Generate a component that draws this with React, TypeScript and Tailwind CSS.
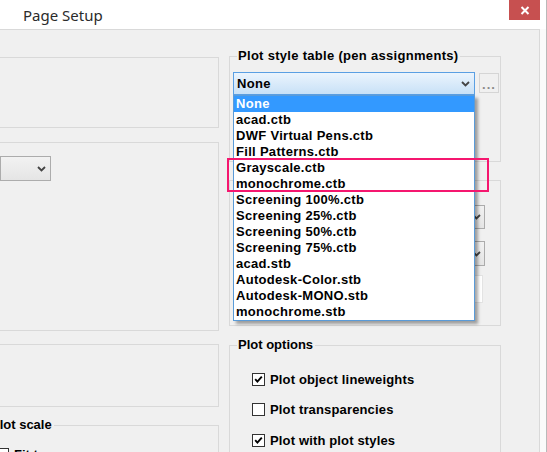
import React from "react";

const Chevron = ({ color = "#444" }: { color?: string }) => (
  <svg width="9" height="6" viewBox="0 0 9 6">
    <path d="M1 1 L4.5 4.5 L8 1" fill="none" stroke={color} strokeWidth="1.8" />
  </svg>
);

const Check = ({ checked }: { checked: boolean }) => (
  <span className="w-[13px] h-[13px] shrink-0 border border-[#333] bg-white flex items-center justify-center">
    {checked && (
      <svg width="9" height="9" viewBox="0 0 9 9">
        <polyline points="1.2,4.2 3.4,6.6 7.8,1.6" fill="none" stroke="#000" strokeWidth="1.9" />
      </svg>
    )}
  </span>
);

const Header = ({ label, labelClass = "" }: { label?: string; labelClass?: string }) => (
  <div className="flex h-[16px]">
    <div className="w-[8px] mt-[8px] border-l border-t border-[#d9d9d9]" />
    {label ? (
      <span className={"pl-[1px] pr-[2px] leading-[16px] whitespace-nowrap " + labelClass}>{label}</span>
    ) : null}
    <div className="flex-1 mt-[8px] border-t border-r border-[#d9d9d9]" />
  </div>
);

const items = [
  "None",
  "acad.ctb",
  "DWF Virtual Pens.ctb",
  "Fill Patterns.ctb",
  "Grayscale.ctb",
  "monochrome.ctb",
  "Screening 100%.ctb",
  "Screening 25%.ctb",
  "Screening 50%.ctb",
  "Screening 75%.ctb",
  "acad.stb",
  "Autodesk-Color.stb",
  "Autodesk-MONO.stb",
  "monochrome.stb",
];

export default function App() {
  return (
    <div className="relative w-[547px] h-[452px] overflow-hidden bg-white flex font-['Liberation_Sans',Arial,sans-serif] text-[13px] font-bold text-black">
      <div className="w-[546px] flex flex-col">
        {/* Title bar */}
        <div className="h-[29px] shrink-0 flex items-start">
          <span className="ml-[23px] mt-[5px] text-[15px] leading-[20px] font-normal text-[#2b2b2b] font-['Noto_Sans',sans-serif]">
            Page Setup
          </span>
          <div className="ml-auto mr-[6px] w-[31px] h-[20px] bg-[#c75050] flex items-center justify-center">
            <svg width="10" height="9" viewBox="0 0 10 9">
              <path d="M1.5 1 L8.5 8 M8.5 1 L1.5 8" stroke="#fff" strokeWidth="2" />
            </svg>
          </div>
        </div>
        {/* Body */}
        <div className="flex-1 flex">
          <div className="w-[540px] bg-[#f0f0f0] border-t border-r border-[#d9d9d9] flex">
            {/* Left column */}
            <div className="w-[219px] flex flex-col">
              <div className="mt-[27px] h-[71px] border-t border-r border-b border-[#d9d9d9]" />
              <div className="mt-[14px] h-[189px] border-t border-r border-b border-[#d9d9d9] pt-[13px]">
                <div className="w-[51px] h-[25px] border border-[#acacac] bg-gradient-to-b from-[#f2f2f2] to-[#e5e5e5] flex items-center justify-end pr-[4px]">
                  <Chevron />
                </div>
              </div>
              <div className="mt-[13px] h-[63px] border-t border-r border-b border-[#d9d9d9]" />
              <div className="mt-[10px] flex h-[16px]">
                <span className="-ml-[9px] pr-[2px] leading-[16px] whitespace-nowrap">Plot scale</span>
                <div className="flex-1 mt-[8px] border-t border-r border-[#d9d9d9]" />
              </div>
              <div className="flex-1 border-r border-[#d9d9d9] pt-[14px]">
                <div className="flex items-center h-[15px] -ml-[4px]">
                  <Check checked={false} />
                  <span className="ml-[5px] leading-[15px]">Fit to paper</span>
                </div>
              </div>
            </div>
            {/* Right column */}
            <div className="ml-[10px] w-[272px] flex flex-col">
              <div className="mt-[18px]">
                <Header label="Plot style table (pen assignments)" labelClass="tracking-[0.3px]" />
                <div className="h-[98px] border-l border-r border-b border-[#d9d9d9] pt-[8px] pl-[3px] flex items-start">
                  <div className="relative w-[242px] h-[23px] border border-[#5a9fe3] bg-gradient-to-b from-[#ebf4fd] to-[#c8e1f7] flex items-center pl-[3px] pr-[4px]">
                    <span className="leading-[16px] tracking-[0.3px]">None</span>
                    <span className="ml-auto">
                      <Chevron />
                    </span>
                    <div className="absolute -left-px top-[22px] w-[242px] h-[226px] z-10 bg-white border border-[#5a9bd8] shadow-[3px_3px_3px_rgba(0,0,0,0.35)]">
                      {items.map((it, i) => (
                        <div
                          key={it}
                          className={
                            "h-[16px] leading-[16px] pl-[2px] whitespace-nowrap tracking-[0.3px] " +
                            (i === 0 ? "bg-[#3399ff] text-white" : "")
                          }
                        >
                          {it}
                        </div>
                      ))}
                    </div>
                  </div>
                  <div className="ml-[4px] mt-[1px] w-[20px] h-[20px] border border-[#d5d5d5] bg-[#f0f0f0] flex items-end justify-center pb-[3px]">
                    <span className="text-[#8a8a8a] leading-[8px] tracking-[1px]">...</span>
                  </div>
                </div>
              </div>
              <div className="mt-[10px]">
                <Header />
                <div className="h-[138px] border-l border-r border-b border-[#d9d9d9] pt-[17px] pr-[15px] pl-[8px] flex flex-col items-end">
                  <div className="w-[160px] h-[24px] border border-[#acacac] bg-gradient-to-b from-[#f2f2f2] to-[#e5e5e5] flex items-center justify-end pr-[3px]">
                    <Chevron />
                  </div>
                  <div className="mt-[12px] w-[160px] h-[25px] border border-[#acacac] bg-gradient-to-b from-[#f2f2f2] to-[#e5e5e5] flex items-center justify-end pr-[3px]">
                    <Chevron />
                  </div>
                  <div className="mt-[9px] mr-[2px] w-[158px] h-[28px] border border-[#e3e3e3] bg-white" />
                </div>
              </div>
              <div className="mt-[11px] flex-1 flex flex-col">
                <Header label="Plot options" />
                <div className="flex-1 border-l border-r border-[#d9d9d9] pl-[22px] pt-[19px] flex flex-col">
                  <div className="flex items-center h-[15px]">
                    <Check checked />
                    <span className="ml-[5px] leading-[15px] tracking-[0.15px]">Plot object lineweights</span>
                  </div>
                  <div className="mt-[15px] flex items-center h-[15px]">
                    <Check checked={false} />
                    <span className="ml-[5px] leading-[15px] tracking-[0.15px]">Plot transparencies</span>
                  </div>
                  <div className="mt-[16px] flex items-center h-[15px]">
                    <Check checked />
                    <span className="ml-[5px] leading-[15px] tracking-[0.15px]">Plot with plot styles</span>
                  </div>
                </div>
              </div>
            </div>
          </div>
          <div className="flex-1 bg-[#fafafa]" />
        </div>
      </div>
      <div className="w-px bg-[#b9b9b9]" />
      {/* annotation highlight */}
      <div className="absolute left-[227px] top-[158px] w-[262px] h-[34px] border-2 border-[#f5176f] z-20" />
    </div>
  );
}
